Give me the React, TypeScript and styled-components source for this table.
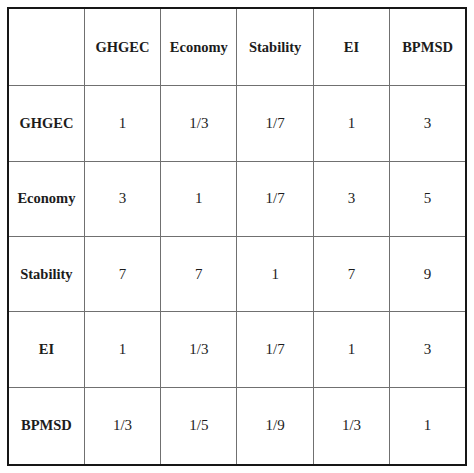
import styled, { createGlobalStyle } from 'styled-components'

const GlobalStyle = createGlobalStyle`
  body {
    margin: 0;
    background: #ffffff;
  }
`

const Page = styled.div`
  padding: 7px 0 0 7px;
`

const Matrix = styled.table`
  border-collapse: collapse;
  width: 460px;
  height: 459px;
  table-layout: fixed;
  border: 2px solid #161616;
  font-family: 'Liberation Serif', 'DejaVu Serif', serif;
  color: #1c1c1c;
`

const Cell = styled.td<{ bold?: boolean }>`
  border: 1px solid #707070;
  text-align: center;
  vertical-align: middle;
  font-size: ${(props) => (props.bold ? '14.5px' : '15px')};
  font-weight: ${(props) => (props.bold ? 700 : 400)};
  padding: 0;
`

const criteria = ['GHGEC', 'Economy', 'Stability', 'EI', 'BPMSD']

const values = [
  ['1', '1/3', '1/7', '1', '3'],
  ['3', '1', '1/7', '3', '5'],
  ['7', '7', '1', '7', '9'],
  ['1', '1/3', '1/7', '1', '3'],
  ['1/3', '1/5', '1/9', '1/3', '1'],
]

export default function App() {
  return (
    <Page>
      <GlobalStyle />
      <Matrix>
        <tbody>
          <tr>
            <Cell />
            {criteria.map((name) => (
              <Cell key={name} bold>
                {name}
              </Cell>
            ))}
          </tr>
          {values.map((row, i) => (
            <tr key={criteria[i]}>
              <Cell bold>{criteria[i]}</Cell>
              {row.map((v, j) => (
                <Cell key={j}>{v}</Cell>
              ))}
            </tr>
          ))}
        </tbody>
      </Matrix>
    </Page>
  )
}
